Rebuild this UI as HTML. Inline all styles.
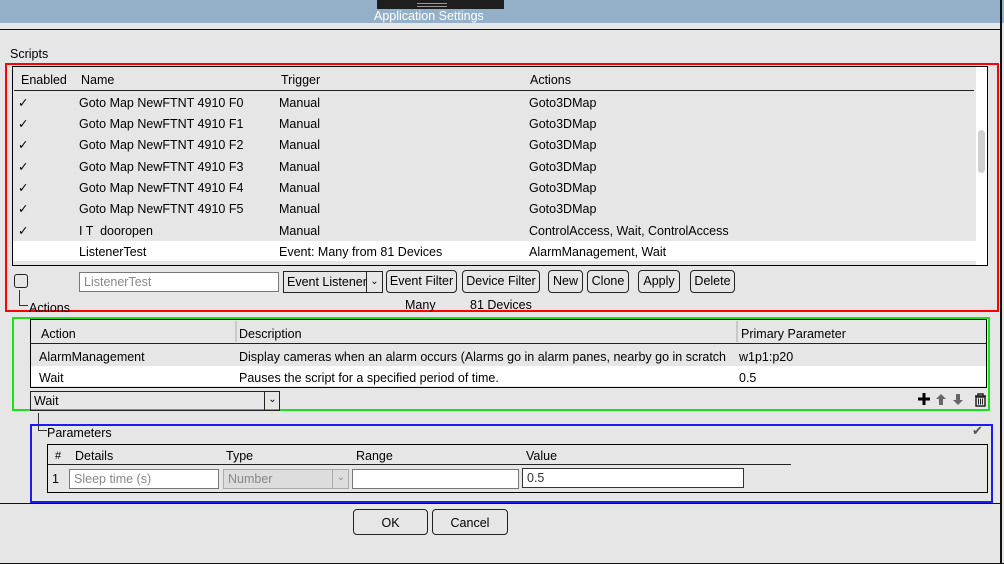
<!DOCTYPE html>
<html><head><meta charset="utf-8"><style>
*{box-sizing:border-box;margin:0;padding:0}
body{width:1004px;height:564px;background:#e6e6e6;font-family:"Liberation Sans",sans-serif;font-size:12.5px;color:#000;position:relative;overflow:hidden}
.a{position:absolute;white-space:nowrap}
.t{position:absolute;white-space:nowrap;line-height:16px;margin-top:1px}
.btn{position:absolute;border:1px solid #222;border-radius:4px;background:#e6e6e6;text-align:center;line-height:21px;height:23px}
.inp{position:absolute;border:1px solid #777;background:#fff;height:20px;line-height:19px;padding-left:4px;color:#888}
</style></head><body>
<div class="a" style="left:0;top:0;width:1004px;height:23px;background:#93b0c8"></div>
<div class="t" style="left:374px;top:7px;color:#fff">Application Settings</div>
<div class="a" style="left:377px;top:0;width:127px;height:9px;background:#1e1e1e"></div>
<div class="a" style="left:417px;top:3px;width:30px;height:1px;background:#999"></div>
<div class="a" style="left:417px;top:6px;width:30px;height:1px;background:#999"></div>
<div class="a" style="left:1000px;top:0;width:2px;height:564px;background:#111"></div>
<div class="a" style="left:0;top:29px;width:1000px;height:1px;background:#111"></div>
<div class="t" style="left:10px;top:45px">Scripts</div>

<!-- red box -->
<div class="a" style="left:5px;top:63px;width:994px;height:249px;border:2px solid #f00"></div>
<div class="a" style="left:12px;top:66px;width:976px;height:200px;border:1px solid #000;background:#e6e6e6"></div>
<div class="a" style="left:976px;top:67px;width:11px;height:198px;background:#fff"></div>
<div class="a" style="left:978px;top:130px;width:7px;height:43px;background:#d2d0ce;border-radius:4px"></div>
<div class="a" style="left:14px;top:90px;width:960px;height:1px;background:#222"></div>
<div class="a" style="left:13px;top:241px;width:963px;height:20px;background:#fff"></div>
<div class="t" style="left:21px;top:71px">Enabled</div>
<div class="t" style="left:81px;top:71px">Name</div>
<div class="t" style="left:281px;top:71px">Trigger</div>
<div class="t" style="left:530px;top:71px">Actions</div>
<div class="t" style="left:18px;top:94px">✓</div><div class="t" style="left:79px;top:94px">Goto Map NewFTNT 4910 F0</div><div class="t" style="left:279px;top:94px">Manual</div><div class="t" style="left:529px;top:94px">Goto3DMap</div>
<div class="t" style="left:18px;top:115px">✓</div><div class="t" style="left:79px;top:115px">Goto Map NewFTNT 4910 F1</div><div class="t" style="left:279px;top:115px">Manual</div><div class="t" style="left:529px;top:115px">Goto3DMap</div>
<div class="t" style="left:18px;top:136px">✓</div><div class="t" style="left:79px;top:136px">Goto Map NewFTNT 4910 F2</div><div class="t" style="left:279px;top:136px">Manual</div><div class="t" style="left:529px;top:136px">Goto3DMap</div>
<div class="t" style="left:18px;top:158px">✓</div><div class="t" style="left:79px;top:158px">Goto Map NewFTNT 4910 F3</div><div class="t" style="left:279px;top:158px">Manual</div><div class="t" style="left:529px;top:158px">Goto3DMap</div>
<div class="t" style="left:18px;top:179px">✓</div><div class="t" style="left:79px;top:179px">Goto Map NewFTNT 4910 F4</div><div class="t" style="left:279px;top:179px">Manual</div><div class="t" style="left:529px;top:179px">Goto3DMap</div>
<div class="t" style="left:18px;top:200px">✓</div><div class="t" style="left:79px;top:200px">Goto Map NewFTNT 4910 F5</div><div class="t" style="left:279px;top:200px">Manual</div><div class="t" style="left:529px;top:200px">Goto3DMap</div>
<div class="t" style="left:18px;top:222px">✓</div><div class="t" style="left:79px;top:222px">I T &nbsp;dooropen</div><div class="t" style="left:279px;top:222px">Manual</div><div class="t" style="left:529px;top:222px">ControlAccess, Wait, ControlAccess</div>
<div class="t" style="left:79px;top:243px">ListenerTest</div><div class="t" style="left:279px;top:243px">Event: Many from 81 Devices</div><div class="t" style="left:529px;top:243px">AlarmManagement, Wait</div>

<div class="a" style="left:14px;top:274px;width:14px;height:14px;border:1px solid #222;border-radius:3px"></div>
<div class="inp" style="left:79px;top:272px;width:200px">ListenerTest</div>
<div class="a" style="left:283px;top:271px;width:100px;height:22px;border:1px solid #222;line-height:21px;padding-left:3px">Event Listener</div>
<div class="a" style="left:366px;top:271px;width:17px;height:22px;border:1px solid #222;text-align:center;line-height:20px;font-size:10px;background:#e6e6e6">⌄</div>
<div class="btn" style="left:386px;top:270px;width:71px">Event Filter</div>
<div class="btn" style="left:462px;top:270px;width:78px">Device Filter</div>
<div class="btn" style="left:548px;top:270px;width:35px">New</div>
<div class="btn" style="left:587px;top:270px;width:42px">Clone</div>
<div class="btn" style="left:638px;top:270px;width:42px">Apply</div>
<div class="btn" style="left:690px;top:270px;width:45px">Delete</div>
<div class="t" style="left:405px;top:296px">Many</div>
<div class="t" style="left:470px;top:296px">81 Devices</div>
<div class="a" style="left:19px;top:290px;width:1px;height:15px;background:#333"></div>
<div class="a" style="left:19px;top:305px;width:9px;height:1px;background:#333"></div>
<div class="t" style="left:29px;top:299px">Actions</div>

<!-- green box -->
<div class="a" style="left:12px;top:317px;width:978px;height:94px;border:2px solid #1be01b"></div>
<div class="a" style="left:30px;top:319px;width:957px;height:69px;border:1px solid #000;background:#e6e6e6"></div>
<div class="a" style="left:31px;top:343px;width:955px;height:1px;background:#222"></div>
<div class="a" style="left:235px;top:321px;width:2px;height:21px;background:#c8c8c8"></div>
<div class="a" style="left:736px;top:321px;width:2px;height:21px;background:#c8c8c8"></div>
<div class="a" style="left:31px;top:366px;width:955px;height:20px;background:#fff"></div>
<div class="t" style="left:41px;top:325px">Action</div>
<div class="t" style="left:239px;top:325px">Description</div>
<div class="t" style="left:741px;top:325px">Primary Parameter</div>
<div class="t" style="left:39px;top:348px">AlarmManagement</div>
<div class="t" style="left:239px;top:348px;width:490px;overflow:hidden">Display cameras when an alarm occurs (Alarms go in alarm panes, nearby go in scratch</div>
<div class="t" style="left:739px;top:348px">w1p1:p20</div>
<div class="t" style="left:39px;top:369px">Wait</div>
<div class="t" style="left:239px;top:369px">Pauses the script for a specified period of time.</div>
<div class="t" style="left:739px;top:369px">0.5</div>
<div class="a" style="left:30px;top:391px;width:250px;height:20px;border:1px solid #222;line-height:19px;padding-left:3px">Wait</div>
<div class="a" style="left:264px;top:391px;width:16px;height:20px;border-left:1px solid #222;text-align:center;line-height:18px;font-size:10px">⌄</div>
<svg class="a" style="left:918px;top:391px" width="70" height="16" viewBox="0 0 70 16">
<path d="M6 2v12M0 8h12" stroke="#000" stroke-width="3"/>
<path d="M23 3l-5 5h3v6h4V8h3z" fill="#666"/>
<path d="M40 14l-5-5h3V3h4v6h3z" fill="#666"/>
<path d="M57 5h11M60 5V3h5v2M58 6h9v9h-9z" fill="none" stroke="#222" stroke-width="1.5"/>
<path d="M60.5 7.5v6M62.5 7.5v6M64.5 7.5v6" stroke="#222"/>
</svg>

<!-- blue box -->
<div class="a" style="left:38px;top:413px;width:1px;height:17px;background:#333"></div>
<div class="a" style="left:38px;top:430px;width:9px;height:1px;background:#333"></div>
<div class="a" style="left:30px;top:424px;width:963px;height:79px;border:2px solid #1c1cf0"></div>
<div class="t" style="left:47px;top:424px">Parameters</div>
<div class="t" style="left:972px;top:422px;color:#555;font-size:13px">✔</div>
<div class="a" style="left:47px;top:444px;width:941px;height:49px;border:1px solid #000"></div>
<div class="a" style="left:48px;top:464px;width:743px;height:1px;background:#222"></div>
<div class="t" style="left:55px;top:447px;font-size:11px">#</div>
<div class="t" style="left:75px;top:447px">Details</div>
<div class="t" style="left:226px;top:447px">Type</div>
<div class="t" style="left:356px;top:447px">Range</div>
<div class="t" style="left:526px;top:447px">Value</div>
<div class="t" style="left:52px;top:470px">1</div>
<div class="inp" style="left:69px;top:469px;width:150px">Sleep time (s)</div>
<div class="a" style="left:223px;top:469px;width:126px;height:20px;border:1px solid #aaa;background:#ddd;color:#888;line-height:19px;padding-left:4px">Number</div>
<div class="a" style="left:332px;top:469px;width:17px;height:20px;border-left:1px solid #aaa;color:#888;font-size:10px;text-align:center;line-height:18px">⌄</div>
<div class="inp" style="left:352px;top:469px;width:167px"></div>
<div class="inp" style="left:522px;top:468px;width:222px;color:#333;border-color:#333">0.5</div>

<div class="a" style="left:0;top:503px;width:1000px;height:1px;background:#111"></div>
<div class="btn" style="left:353px;top:509px;width:75px;height:26px;line-height:26px">OK</div>
<div class="btn" style="left:432px;top:509px;width:76px;height:26px;line-height:26px">Cancel</div>
<div class="a" style="left:0;top:563px;width:1004px;height:1px;background:#111"></div>
</body></html>
